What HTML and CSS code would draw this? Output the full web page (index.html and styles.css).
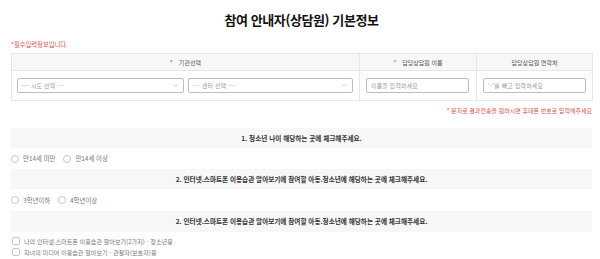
FILE: index.html
```html
<!DOCTYPE html>
<html lang="ko">
<head>
<meta charset="utf-8">
<link rel="stylesheet" href="styles.css">
</head>
<body>
<div class="wrap">
  <h1 class="title">참여 안내자(상담원) 기본정보</h1>
  <p class="req">*필수입력정보입니다.</p>
  <table class="info">
    <tr class="head">
      <th class="c1"><span class="star">*</span>기관선택</th>
      <th class="c2"><span class="star">*</span>담당상담원 이름</th>
      <th class="c3">담당상담원 연락처</th>
    </tr>
    <tr class="body">
      <td class="c1">
        <div class="selects">
          <div class="sel s1"><span>--- 시도 선택 ---</span><svg class="arr" viewBox="0 0 6 4" width="5" height="3"><path d="M0.5 0.5 L3 3 L5.5 0.5" fill="none" stroke="#aaa" stroke-width="0.8"/></svg></div>
          <div class="sel s2"><span>--- 센터 선택 ---</span><svg class="arr" viewBox="0 0 6 4" width="5" height="3"><path d="M0.5 0.5 L3 3 L5.5 0.5" fill="none" stroke="#aaa" stroke-width="0.8"/></svg></div>
        </div>
      </td>
      <td class="c2"><div class="inp">이름을 입력하세요</div></td>
      <td class="c3"><div class="inp">'-'를 빼고 입력하세요</div></td>
    </tr>
  </table>
  <p class="note">* 문자로 결과전송을 원하시면 휴대폰 번호로 입력해주세요</p>

  <div class="band b1">1. 청소년 나이 해당하는 곳에 체크해주세요.</div>
  <div class="opts r1">
    <label class="opt"><span class="radio"></span>만14세 미만</label>
    <label class="opt"><span class="radio"></span>만14세 이상</label>
  </div>
  <div class="band b2">2. 인터넷.스마트폰 이용습관 알아보기에 참여할 아동.청소년에 해당하는 곳에 체크해주세요.</div>
  <div class="opts r2">
    <label class="opt"><span class="radio"></span>3학년이하</label>
    <label class="opt"><span class="radio"></span>4학년이상</label>
  </div>
  <div class="band b3">2. 인터넷.스마트폰 이용습관 알아보기에 참여할 아동.청소년에 해당하는 곳에 체크해주세요.</div>
  <div class="checks">
    <label class="chk"><span class="box"></span>나의 인터넷.스마트폰 이용습관 알아보기(2가지) - 청소년용</label>
    <label class="chk"><span class="box"></span>자녀의 미디어 이용습관 알아보기 - 관찰자(보호자)용</label>
  </div>
</div>
</body>
</html>
```

FILE: styles.css
```css
* { box-sizing: border-box; }
html, body { margin: 0; padding: 0; background: #fff; }
body {
  font-family: "Noto Sans CJK KR", "Noto Sans", sans-serif;
  color: #333;
  width: 600px;
  height: 259px;
  overflow: hidden;
}
.wrap {
  margin-left: 11px;
  width: 581px;
}
.title {
  margin: 0;
  padding-top: 11px;
  height: 36px;
  font-size: 13px;
  line-height: 18px;
  font-weight: 700;
  text-align: center;
  color: #111;
  letter-spacing: -0.4px;
}
.req {
  margin: 0;
  height: 17px;
  font-size: 6.3px;
  line-height: 17px;
  color: #d9534f;
}
.info {
  width: 581px;
  border-collapse: collapse;
  table-layout: fixed;
}
.info th, .info td {
  border: 1px solid #e6e6e6;
  padding: 0;
}
.info .c1 { width: 348px; }
.info .c2 { width: 117px; }
.info .c3 { width: 116px; }
.head th {
  height: 17px;
  background: #f7f7f7;
  font-size: 6px;
  font-weight: 400;
  color: #555;
  text-align: center;
}
.star { color: #e0474c; margin-right: 6px; }
.body td { height: 30px; vertical-align: middle; }
.selects { display: flex; gap: 4px; padding: 0 5px 0 5px; }
.sel, .inp {
  height: 15px;
  border: 1px solid #bdbdbd;
  border-radius: 2px;
  font-size: 5.8px;
  letter-spacing: 0.3px;
  color: #999;
  display: flex;
  align-items: center;
  padding-left: 4px;
}
.sel { justify-content: space-between; padding-right: 5px; }
.s1 { width: 167px; }
.s2 { width: 165px; }
.arr { display: block; }
.c2 .inp, .c3 .inp { width: 103px; margin-left: 6px; }
.note {
  margin: 0;
  height: 27px;
  padding-top: 4px;
  font-size: 6px;
  line-height: 12px;
  text-align: right;
  color: #d9534f;
}
.band {
  height: 20px;
  background: #f7f7f7;
  font-size: 6.6px;
  font-weight: 700;
  color: #333;
  text-align: center;
  line-height: 20px;
}
.b3 { height: 21px; line-height: 21px; }
.opts {
  display: flex;
  gap: 8px;
  height: 21px;
  align-items: center;
  padding-left: 0;
}
.r1 { height: 21px; }
.r2 { height: 22px; }
.opt, .chk {
  display: flex;
  align-items: center;
  font-size: 6.4px;
  color: #777;
}
.chk { font-size: 6.1px; }
.radio {
  width: 8px;
  height: 8px;
  border: 1px solid #c8c8c8;
  border-radius: 50%;
  margin-right: 4px;
  background: #fff;
}
.checks { padding-top: 5px; display: flex; flex-direction: column; gap: 3px; }
.chk { height: 8px; }
.box {
  width: 8px;
  height: 8px;
  border: 1px solid #c8c8c8;
  border-radius: 2px;
  margin-right: 4px;
  margin-left: 1px;
  background: #fff;
}
```
